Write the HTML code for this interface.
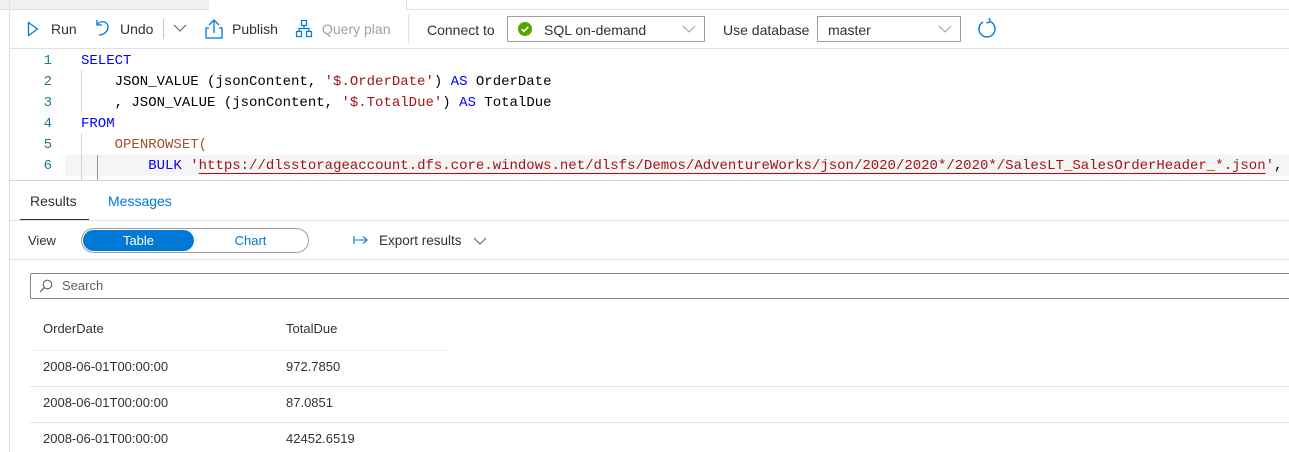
<!DOCTYPE html>
<html><head><meta charset="utf-8"><style>
*{box-sizing:border-box;margin:0;padding:0}
body{width:1289px;height:452px;overflow:hidden;background:#fff;font-family:"Liberation Sans",sans-serif;color:#323130;position:relative}
.a{position:absolute;white-space:nowrap}
.ui{font-size:14px}
.code{font-family:"Liberation Mono",monospace;font-size:14px;color:#000;white-space:pre}
.ln{font-family:"Liberation Mono",monospace;font-size:14px;color:#237893;width:20px;text-align:right}
.kw{color:#0000ff}.str{color:#a31515}.fn{color:#a0522d}
.guide{position:absolute;width:1px;background:#d3d3d3}
.hl{position:absolute;height:1px;background:#e1e1e1}
.cell{font-size:13px;color:#323130}
</style></head><body>
<div class="a" style="left:0;top:0;width:209px;height:10px;background:#f0f0f0"></div>
<div class="a" style="left:209px;top:0;width:198px;height:10px;background:#fff;border-right:1px solid #e1e1e1"></div>
<div class="a" style="left:407px;top:0;width:882px;height:10px;background:#fff;border-bottom:1px solid #e1e1e1"></div>
<div class="a" style="left:0;top:0;width:209px;height:10px;border-bottom:1px solid #e1e1e1"></div>
<div class="a" style="left:9px;top:0;width:1px;height:452px;background:#e1e1e1"></div>
<svg class="a" style="left:27px;top:21px" width="12" height="16"><path d="M1.5 1.5 L10.5 8 L1.5 14.5 Z" fill="none" stroke="#0078d4" stroke-width="1.3"/></svg>
<div class="a ui" style="left:51px;top:21px">Run</div>
<svg class="a" style="left:94px;top:18px" width="16" height="20"><path d="M3 2 L3 7 L8 7 M3 7 C6 2 14 3 14 9 C14 14 9 17 5 17" fill="none" stroke="#0078d4" stroke-width="1.3"/></svg>
<div class="a ui" style="left:120px;top:21px">Undo</div>
<div class="a" style="left:163px;top:19px;width:1px;height:20px;background:#c8c8c8"></div>
<svg class="a" style="left:173px;top:24px" width="14" height="9"><path d="M1 1 L7 7 L13 1" fill="none" stroke="#605e5c" stroke-width="1"/></svg>
<svg class="a" style="left:204px;top:18px" width="20" height="22"><path d="M10 2 L10 15 M5 7 L10 2 L15 7 M5 10 L2 10 L2 20 L18 20 L18 10 L15 10" fill="none" stroke="#0078d4" stroke-width="1.3"/></svg>
<div class="a ui" style="left:232px;top:21px">Publish</div>
<svg class="a" style="left:295px;top:19px" width="18" height="19"><rect x="6.5" y="1.5" width="5" height="5" fill="none" stroke="#0078d4" stroke-width="1.2"/><rect x="1.5" y="12.5" width="5" height="5" fill="none" stroke="#0078d4" stroke-width="1.2"/><rect x="11.5" y="12.5" width="5" height="5" fill="none" stroke="#0078d4" stroke-width="1.2"/><path d="M9 6.5 V9.5 M4 12.5 V9.5 H14 V12.5" fill="none" stroke="#0078d4" stroke-width="1.2"/></svg>
<div class="a ui" style="left:322px;top:21px;color:#a19f9d">Query plan</div>
<div class="a" style="left:408px;top:14px;width:1px;height:29px;background:#e1e1e1"></div>
<div class="a ui" style="left:427px;top:22px;color:#323130">Connect to</div>
<div class="a" style="left:507px;top:16px;width:198px;height:26px;border:1px solid #a19f9d"></div>
<svg class="a" style="left:518px;top:22px" width="14" height="14"><circle cx="7" cy="7" r="7" fill="#57a300"/><path d="M3.8 7.2 L6 9.4 L10.3 4.8" fill="none" stroke="#fff" stroke-width="1.6"/></svg>
<div class="a ui" style="left:544px;top:22px">SQL on-demand</div>
<svg class="a" style="left:682px;top:25px" width="14" height="9"><path d="M1 1 L7 7 L13 1" fill="none" stroke="#a19f9d" stroke-width="1"/></svg>
<div class="a ui" style="left:723px;top:22px">Use database</div>
<div class="a" style="left:817px;top:16px;width:144px;height:26px;border:1px solid #a19f9d"></div>
<div class="a ui" style="left:828px;top:22px">master</div>
<svg class="a" style="left:938px;top:25px" width="14" height="9"><path d="M1 1 L7 7 L13 1" fill="none" stroke="#a19f9d" stroke-width="1"/></svg>
<svg class="a" style="left:976px;top:17px" width="22" height="24"><path d="M7 5 A8 8 0 1 0 14 4.5" fill="none" stroke="#0078d4" stroke-width="1.4"/><path d="M13 1 L14.5 4.8 L10.5 6" fill="none" stroke="#0078d4" stroke-width="1.4"/></svg>
<div class="hl" style="left:9px;top:48px;width:1280px"></div>
<div class="a" style="left:65px;top:155px;width:1224px;height:21px;background:#f5f5f5"></div>
<div class="guide" style="left:81px;top:70px;height:42px"></div>
<div class="guide" style="left:81px;top:133px;height:47px"></div>
<div class="guide" style="left:97px;top:155px;height:25px;background:#999"></div>
<div class="a ln" style="left:32px;top:53px">1</div>
<div class="a ln" style="left:32px;top:74px">2</div>
<div class="a ln" style="left:32px;top:95px">3</div>
<div class="a ln" style="left:32px;top:116px">4</div>
<div class="a ln" style="left:32px;top:137px">5</div>
<div class="a ln" style="left:32px;top:158px">6</div>
<div class="a code" style="left:81px;top:53px"><span class="kw">SELECT</span></div>
<div class="a code" style="left:81px;top:74px">    JSON_VALUE (jsonContent, <span class="str">'$.OrderDate'</span>) <span class="kw">AS</span> OrderDate</div>
<div class="a code" style="left:81px;top:95px">    , JSON_VALUE (jsonContent, <span class="str">'$.TotalDue'</span>) <span class="kw">AS</span> TotalDue</div>
<div class="a code" style="left:81px;top:116px"><span class="kw">FROM</span></div>
<div class="a code" style="left:81px;top:137px">    <span class="fn">OPENROWSET(</span></div>
<div class="a code" style="left:81px;top:158px">        <span class="kw">BULK</span> <span class="str">'<span style="text-decoration:underline;text-decoration-color:#c00;text-underline-offset:4px;text-decoration-skip-ink:none">https://dlsstorageaccount.dfs.core.windows.net/dlsfs/Demos/AdventureWorks/json/2020/2020*/2020*/SalesLT_SalesOrderHeader_*.json</span>'</span>,</div>
<div class="hl" style="left:9px;top:180px;width:1280px;background:#d6d6d6"></div>
<div class="a ui" style="left:30px;top:193px">Results</div>
<div class="a ui" style="left:108px;top:193px;color:#0078d4">Messages</div>
<div class="a" style="left:20px;top:219px;width:69px;height:2px;background:#323130"></div>
<div class="hl" style="left:9px;top:220px;width:1280px"></div>
<div class="a ui" style="left:28px;top:233px;font-size:13px">View</div>
<div class="a" style="left:81px;top:228px;width:228px;height:25px;border:1px solid #a19f9d;border-radius:13px"></div>
<div class="a" style="left:83px;top:230px;width:111px;height:21px;background:#0078d4;border-radius:11px;color:#fff;font-size:13px;text-align:center;line-height:21px">Table</div>
<div class="a" style="left:194px;top:230px;width:113px;height:21px;color:#0078d4;font-size:13px;text-align:center;line-height:21px">Chart</div>
<svg class="a" style="left:353px;top:235px" width="16" height="10"><path d="M1 1 V9 M1 5 H14 M10 1.5 L14 5 L10 8.5" fill="none" stroke="#0078d4" stroke-width="1.1"/></svg>
<div class="a ui" style="left:379px;top:233px;font-size:13.5px">Export results</div>
<svg class="a" style="left:473px;top:237px" width="14" height="9"><path d="M1 1 L7 7 L13 1" fill="none" stroke="#605e5c" stroke-width="1"/></svg>
<div class="hl" style="left:9px;top:259px;width:1280px"></div>
<div class="a" style="left:30px;top:273px;width:1265px;height:26px;border:1px solid #8a8886;border-radius:2px"></div>
<svg class="a" style="left:39px;top:279px" width="14" height="14"><circle cx="8.5" cy="5.5" r="4.3" fill="none" stroke="#605e5c" stroke-width="1.1"/><path d="M5.3 8.7 L1 13" stroke="#605e5c" stroke-width="1.2"/></svg>
<div class="a ui" style="left:62px;top:278px;font-size:13px;color:#605e5c">Search</div>
<div class="a cell" style="left:43px;top:321px">OrderDate</div>
<div class="a cell" style="left:286px;top:321px">TotalDue</div>
<div class="hl" style="left:30px;top:350px;width:420px;background:#eee"></div>
<div class="a cell" style="left:43px;top:359px">2008-06-01T00:00:00</div>
<div class="a cell" style="left:286px;top:359px">972.7850</div>
<div class="hl" style="left:30px;top:386px;width:1259px;background:#e1e5ea"></div>
<div class="a cell" style="left:43px;top:395px">2008-06-01T00:00:00</div>
<div class="a cell" style="left:286px;top:395px">87.0851</div>
<div class="hl" style="left:30px;top:422px;width:1259px;background:#e1e5ea"></div>
<div class="a cell" style="left:43px;top:431px">2008-06-01T00:00:00</div>
<div class="a cell" style="left:286px;top:431px">42452.6519</div>
</body></html>
